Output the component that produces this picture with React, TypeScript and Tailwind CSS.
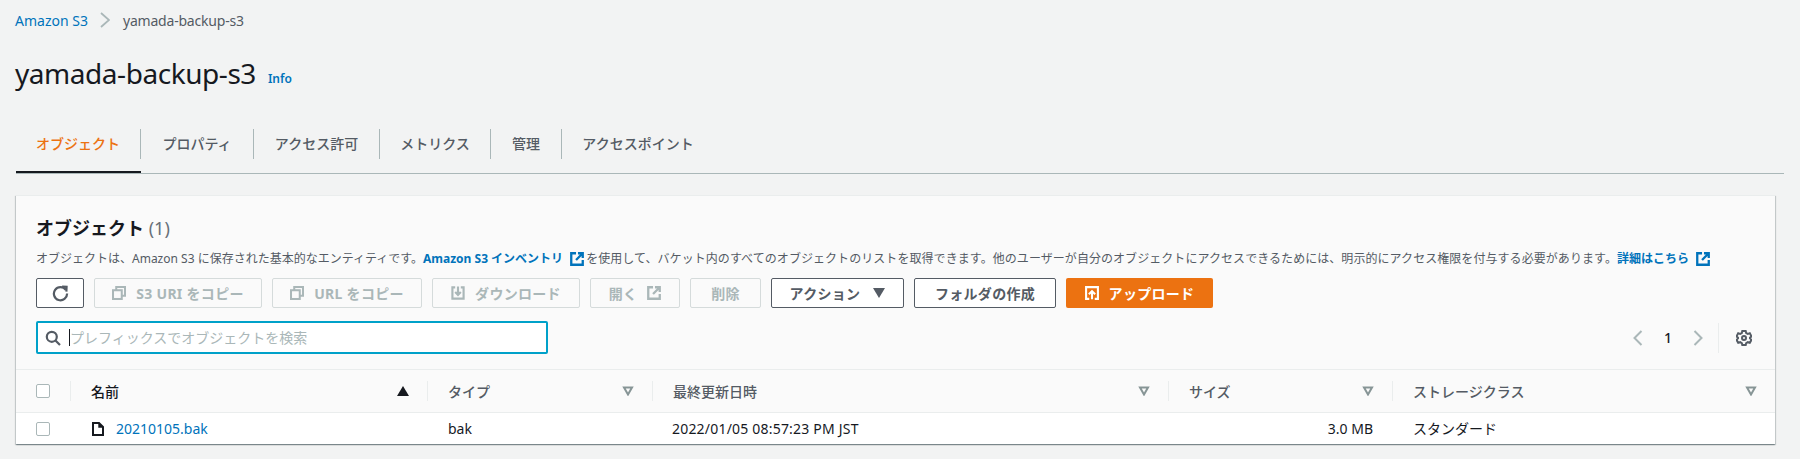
import React from "react";

const font = "[font-family:'Noto_Sans','Noto_Sans_CJK_JP',sans-serif]";

function Ext({ className = "" }: { className?: string }) {
  return (
    <svg viewBox="0.7 0.7 14.6 14.6" fill="none" stroke="currentColor" strokeWidth="2.4" className={className}>
      <path d="M7 2H2v12h12V9" />
      <path d="M9 2h5v5M14 2L7 9" />
    </svg>
  );
}
function Copy() {
  return (
    <svg viewBox="0.4 0.4 15.2 15.2" fill="none" stroke="currentColor" strokeWidth="2.2" className="w-[14px] h-[14px] shrink-0">
      <path d="M5 5V1.5h9.5V11H11" />
      <rect x="1.5" y="5" width="9.5" height="9.5" />
    </svg>
  );
}
function Sort({ active = false }: { active?: boolean }) {
  return active ? (
    <svg viewBox="0 0 12 10" className="w-3 h-2.5 text-[#16191f]" fill="currentColor">
      <path d="M6 0l6 10H0z" />
    </svg>
  ) : (
    <svg viewBox="0 0 12 10" className="w-3 h-2.5 text-[#879596]" fill="none" stroke="currentColor" strokeWidth="2">
      <path d="M2 1.5h8L6 8.5z" />
    </svg>
  );
}
function Btn({ children, disabled = false, w }: { children: React.ReactNode; disabled?: boolean; w: string }) {
  return (
    <div
      className={`${w} h-[30px] shrink-0 flex items-center justify-center gap-[10px] rounded-[2px] border text-[14px] font-bold tracking-[0.3px] ${
        disabled ? "border-[#d5dbdb] text-[#aab7b8] bg-[#fafafa]" : "border-[#545b64] text-[#545b64] bg-white"
      }`}
    >
      {children}
    </div>
  );
}
function Check() {
  return <div className="w-[14px] h-[14px] rounded-[2px] border border-[#aab7b8] bg-white" />;
}
function Head({ w, label, grow = false }: { w: string; label: string; grow?: boolean }) {
  return (
    <div className={`${w} ${grow ? "flex-1" : "shrink-0"} h-[20px] flex items-center justify-between pl-5 pr-[18px] border-r border-[#eaeded] last:border-r-0 text-[#545b64] font-medium text-[14px]`}>
      <span>{label}</span>
      <Sort />
    </div>
  );
}

const tabs = [
  ["オブジェクト", "w-[125px]"],
  ["プロパティ", "w-[113px]"],
  ["アクセス許可", "w-[126px]"],
  ["メトリクス", "w-[111px]"],
  ["管理", "w-[71px]"],
  ["アクセスポイント", "w-[152px]"],
];

export default function App() {
  return (
    <div className={`${font} w-[1800px] h-[459px] overflow-hidden bg-[#f2f3f3] text-[#16191f] px-4`}>
      <nav className="h-[40px] flex items-center text-[14px] text-[#545b64] -ml-px">
        <a className="text-[#0073bb]">Amazon S3</a>
        <svg viewBox="0 0 10 16" className="w-[10px] h-[16px] ml-[12px] mr-[13px] text-[#aab7b8]" fill="none" stroke="currentColor" strokeWidth="1.8">
          <path d="M1 1l8 7-8 7" />
        </svg>
        <span className="tracking-[-0.2px]">yamada-backup-s3</span>
      </nav>
      <div className="h-[89px] pt-[11px] flex items-start -ml-px">
        <h1 className="text-[28px] leading-[44px] font-normal tracking-[-0.45px]">yamada-backup-s3</h1>
        <a className="ml-[12px] mt-[19px] text-[12px] font-semibold text-[#0073bb]">Info</a>
      </div>
      <div className="h-[45px] flex border-b border-[#aab7b8] relative">
        {tabs.map(([t, w], i) => (
          <div key={t} className={`${w} h-[30px] pb-[2px] flex items-center justify-center text-[14px] font-medium ${i === 0 ? "text-[#ec7211]" : "text-[#545b64]"} ${i < 5 ? "border-r border-[#aab7b8]" : ""}`}>
            {t}
          </div>
        ))}
        <div className="absolute left-0 top-[42px] w-[125px] h-[2px] bg-[#16191f]" />
      </div>
      <section className="mt-[21px] w-[1759px] bg-[#fafafa] border-t border-[#eaeded] shadow-[0_1px_1px_0_rgba(0,28,36,0.3),1px_1px_1px_0_rgba(0,28,36,0.15),-1px_1px_1px_0_rgba(0,28,36,0.15)]">
        <div className="pl-5 pr-[23px] pt-[20px] h-[174px] border-b border-[#eaeded]">
          <h2 className="text-[18px] leading-[24px] font-bold">
            オブジェクト <span className="font-normal text-[#687078]">(1)</span>
          </h2>
          <p className="mt-[11px] h-[16px] text-[12px] leading-[16px] text-[#545b64] whitespace-nowrap flex items-center">
            <span>オブジェクトは、Amazon S3 に保存された基本的なエンティティです。</span>
            <a className="font-bold text-[#0073bb] flex items-center gap-[7px]">Amazon S3 インベントリ<Ext className="w-[14px] h-[14px]" /></a>
            <span className="ml-[2px] tracking-[0.06px]">を使用して、バケット内のすべてのオブジェクトのリストを取得できます。他のユーザーが自分のオブジェクトにアクセスできるためには、明示的にアクセス権限を付与する必要があります。</span>
            <a className="font-bold text-[#0073bb] flex items-center gap-[7px]">詳細はこちら<Ext className="w-[14px] h-[14px]" /></a>
          </p>
          <div className="mt-[11px] flex gap-[10px]">
            <Btn w="w-[48px]">
              <svg viewBox="0 0 16 16" className="w-[17px] h-[17px]" fill="none" stroke="currentColor" strokeWidth="2.1">
                <path d="M13 4.5A6.2 6.2 0 1 0 14.2 8" />
                <path d="M9.5 1.5l4.2.2-.2 4.5" />
              </svg>
            </Btn>
            <Btn disabled w="w-[168px]"><Copy />S3 URI をコピー</Btn>
            <Btn disabled w="w-[150px]"><Copy />URL をコピー</Btn>
            <Btn disabled w="w-[148px]">
              <svg viewBox="0.5 0.5 15 15" className="w-[14px] h-[14px] shrink-0" fill="none" stroke="currentColor" strokeWidth="2.3">
                <path d="M5 2H2v12h12V2h-3" />
                <path d="M8 1v9M5 7l3 3 3-3" />
              </svg>
              ダウンロード
            </Btn>
            <Btn disabled w="w-[90px]">開く<Ext className="w-[14px] h-[14px]" /></Btn>
            <Btn disabled w="w-[71px]">削除</Btn>
            <Btn w="w-[133px]">
              アクション
              <svg viewBox="0 0 12 10" className="w-3 h-2.5 ml-[3px]" fill="currentColor"><path d="M0 0h12L6 10z" /></svg>
            </Btn>
            <Btn w="w-[142px]">フォルダの作成</Btn>
            <div className="w-[147px] h-[30px] flex items-center justify-center gap-[10px] rounded-[2px] bg-[#ec7211] text-white text-[14px] font-bold tracking-[0.3px]">
              <svg viewBox="0.3 0.3 15.4 15.4" className="w-[14px] h-[14px] shrink-0" fill="none" stroke="currentColor" strokeWidth="2.3">
                <path d="M5 14.5H1.5v-13h13v13H11" />
                <path d="M8 15V6M4.5 9.5L8 6l3.5 3.5" />
              </svg>
              アップロード
            </div>
          </div>
          <div className="mt-[13px] flex items-center justify-between">
            <div className="w-[512px] h-[33px] rounded-[2px] border-2 border-[#00a1c9] bg-white flex items-center pl-[7px] text-[14px] text-[#aab7b8]">
              <svg viewBox="0 0 16 16" className="w-[16px] h-[16px] text-[#545b64] shrink-0" fill="none" stroke="currentColor" strokeWidth="2.2">
                <circle cx="6.8" cy="6.8" r="5" />
                <path d="M10.5 10.5l4.5 4.5" />
              </svg>
              <span className="ml-[8px] w-px h-[17px] bg-[#16191f]" />
              <span>プレフィックスでオブジェクトを検索</span>
            </div>
            <div className="flex items-center h-[30px]">
              <svg viewBox="0 0 10 16" className="w-[10px] h-4 text-[#aab7b8]" fill="none" stroke="currentColor" strokeWidth="2"><path d="M8.5 1L1.5 8l7 7" /></svg>
              <span className="w-[50px] text-center text-[14px] font-medium">1</span>
              <svg viewBox="0 0 10 16" className="w-[10px] h-4 text-[#aab7b8]" fill="none" stroke="currentColor" strokeWidth="2"><path d="M1.5 1l7 7-7 7" /></svg>
              <span className="ml-[15px] w-px h-[30px] bg-[#eaeded]" />
              <svg viewBox="0 0 16 16" className="ml-[17px] w-4 h-4 text-[#545b64]" fill="none" stroke="currentColor">
                <path strokeWidth="2" d="M6.3 1h3.4l.5 2 1.6.9 2-.6 1.7 3-1.5 1.4v.7l1.5 1.4-1.7 3-2-.6-1.6.9-.5 2H6.3l-.5-2-1.6-.9-2 .6-1.7-3 1.5-1.4v-.7L.5 6.3l1.7-3 2 .6L5.8 3z" />
                <circle cx="8" cy="8" r="2" strokeWidth="2" />
              </svg>
            </div>
          </div>
        </div>
        <div className="h-[43px] flex items-center border-b border-[#eaeded]">
          <div className="w-[55px] h-[20px] shrink-0 pl-5 flex items-center border-r border-[#eaeded]"><Check /></div>
          <div className="w-[357px] h-[20px] shrink-0 pl-5 pr-[18px] flex items-center justify-between border-r border-[#eaeded] text-[14px] font-medium">
            <span>名前</span><Sort active />
          </div>
          <Head w="w-[225px]" label="タイプ" />
          <Head w="w-[516px]" label="最終更新日時" />
          <Head w="w-[224px]" label="サイズ" />
          <Head w="" label="ストレージクラス" grow />
        </div>
        <div className="h-[31px] flex items-center bg-white text-[14px]">
          <div className="w-[55px] shrink-0 pl-5 flex items-center"><Check /></div>
          <div className="w-[357px] shrink-0 pl-[21px] flex items-center gap-[12px]">
            <svg viewBox="0 0 12 14" className="w-3 h-[14px] shrink-0" fill="none" stroke="#16191f" strokeWidth="2" strokeLinejoin="miter">
              <path d="M1 1h6l4 4v8H1z" />
              <path d="M7 1v4h4" fill="#16191f" strokeWidth="1.4" />
            </svg>
            <a className="text-[#0073bb]">20210105.bak</a>
          </div>
          <div className="w-[225px] shrink-0 pl-5">bak</div>
          <div className="w-[516px] shrink-0 pl-[19px] tracking-[0.2px]">2022/01/05 08:57:23 PM JST</div>
          <div className="w-[224px] shrink-0 pr-5 text-right">3.0 MB</div>
          <div className="flex-1 pl-5">スタンダード</div>
        </div>
      </section>
    </div>
  );
}
